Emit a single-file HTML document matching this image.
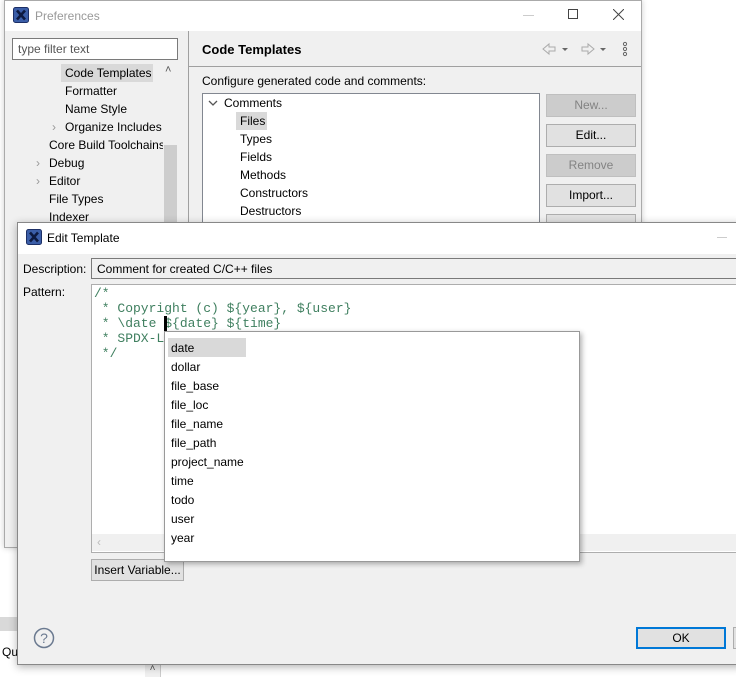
<!DOCTYPE html>
<html><head><style>
*{margin:0;padding:0;box-sizing:border-box}
body{width:736px;height:677px;overflow:hidden;background:#fff;font-family:"Liberation Sans",sans-serif;font-size:12px;color:#000;position:relative}
.a{position:absolute;white-space:nowrap}
.btn{position:absolute;background:#e1e1e1;border:1px solid #adadad;text-align:center;line-height:20px;font-size:12px}
.dis{color:#838383;background:#cccccc;border-color:#bfbfbf}
.mono{font-family:"Liberation Mono",monospace;font-size:13px;color:#3f7f5f;line-height:15px}
</style></head><body>
<div class="a" style="left:4px;top:0;width:638px;height:548px;background:#f0f0f0;border:1px solid #aaa;box-shadow:0 0 6px rgba(0,0,0,.2)"></div>
<div class="a" style="left:5px;top:1px;width:636px;height:30px;background:#fff"></div>
<svg class="a" style="left:13px;top:7px" width="16" height="16"><rect x="0.5" y="0.5" width="15" height="15" rx="2" fill="#3b5ea8" stroke="#1c2f66"/><path d="M4 3.5L12 12.5M12 3.5L4 12.5" stroke="#0d1a40" stroke-width="2.6"/></svg>
<div class="a" style="left:35px;top:9px;color:#999;font-size:12px">Preferences</div>
<div class="a" style="left:523px;top:15px;width:11px;height:1px;background:#ccc"></div>
<div class="a" style="left:568px;top:9px;width:10px;height:10px;border:1px solid #444"></div>
<svg class="a" style="left:613px;top:9px" width="11" height="11"><path d="M0 0L11 11M11 0L0 11" stroke="#444"/></svg>
<div class="a" style="left:12px;top:38px;width:166px;height:22px;background:#fff;border:1px solid #7a7a7a"></div>
<div class="a" style="left:18px;top:42px;color:#555">type filter text</div>
<div class="a" style="left:61px;top:64px;width:92px;height:18px;background:#d9d9d9"></div>
<div class="a" style="left:65px;top:66px">Code Templates</div>
<div class="a" style="left:65px;top:84px">Formatter</div>
<div class="a" style="left:65px;top:102px">Name Style</div>
<div class="a" style="left:52px;top:120px;color:#999">›</div>
<div class="a" style="left:65px;top:120px">Organize Includes</div>
<div class="a" style="left:49px;top:138px;width:114px;overflow:hidden">Core Build Toolchains</div>
<div class="a" style="left:36px;top:156px;color:#999">›</div>
<div class="a" style="left:49px;top:156px">Debug</div>
<div class="a" style="left:36px;top:174px;color:#999">›</div>
<div class="a" style="left:49px;top:174px">Editor</div>
<div class="a" style="left:49px;top:192px">File Types</div>
<div class="a" style="left:49px;top:210px">Indexer</div>
<div class="a" style="left:163px;top:64px;width:15px;height:160px;background:#f0f0f0"></div>
<div class="a" style="left:164px;top:145px;width:13px;height:80px;background:#cdcdcd"></div>
<div class="a" style="left:165px;top:64px;color:#555;font-size:11px">˄</div>
<div class="a" style="left:188px;top:31px;width:1px;height:200px;background:#a0a0a0"></div>
<div class="a" style="left:202px;top:42px;font-weight:bold;font-size:13px">Code Templates</div>
<svg class="a" style="left:540px;top:41px" width="92" height="16"><path d="M3 8L9 3V6H15V10H9V13Z" fill="none" stroke="#aaa"/><path d="M22 7H28L25 10Z" fill="#666"/><path d="M54 8L48 3V6H42V10H48V13Z" fill="none" stroke="#aaa"/><path d="M60 7H66L63 10Z" fill="#666"/><circle cx="85" cy="3" r="1.6" fill="none" stroke="#666"/><circle cx="85" cy="8" r="1.6" fill="none" stroke="#666"/><circle cx="85" cy="13" r="1.6" fill="none" stroke="#666"/></svg>
<div class="a" style="left:189px;top:66px;width:452px;height:1px;background:#a0a0a0"></div>
<div class="a" style="left:202px;top:74px">Configure generated code and comments:</div>
<div class="a" style="left:202px;top:93px;width:338px;height:140px;background:#fff;border:1px solid #828790"></div>
<svg class="a" style="left:208px;top:99px" width="10" height="8"><path d="M1 2L5 6L9 2" fill="none" stroke="#555" stroke-width="1.3"/></svg>
<div class="a" style="left:224px;top:96px">Comments</div>
<div class="a" style="left:236px;top:112px;width:31px;height:18px;background:#d9d9d9"></div>
<div class="a" style="left:240px;top:114px">Files</div>
<div class="a" style="left:240px;top:132px">Types</div>
<div class="a" style="left:240px;top:150px">Fields</div>
<div class="a" style="left:240px;top:168px">Methods</div>
<div class="a" style="left:240px;top:186px">Constructors</div>
<div class="a" style="left:240px;top:204px">Destructors</div>
<div class="btn dis" style="left:546px;top:94px;width:90px;height:23px">New...</div>
<div class="btn" style="left:546px;top:124px;width:90px;height:23px">Edit...</div>
<div class="btn dis" style="left:546px;top:154px;width:90px;height:23px">Remove</div>
<div class="btn" style="left:546px;top:184px;width:90px;height:23px">Import...</div>
<div class="btn" style="left:546px;top:214px;width:90px;height:23px"></div>
<div class="a" style="left:0;top:617px;width:17px;height:14px;background:#d9d9d9"></div>
<div class="a" style="left:2px;top:645px">Qu</div>
<div class="a" style="left:0;top:665px;width:736px;height:12px;background:#fff"></div>
<div class="a" style="left:145px;top:663px;width:16px;height:14px;background:#f0f0f0;border-right:1px solid #ccc;font-size:10px;text-align:center;color:#555">˄</div>
<div class="a" style="left:17px;top:222px;width:725px;height:443px;background:#f0f0f0;border:1px solid #888;box-shadow:0 2px 8px rgba(0,0,0,.3)"></div>
<div class="a" style="left:18px;top:223px;width:718px;height:31px;background:#fff"></div>
<svg class="a" style="left:26px;top:229px" width="16" height="16"><rect x="0.5" y="0.5" width="15" height="15" rx="2" fill="#3b5ea8" stroke="#1c2f66"/><path d="M4 3.5L12 12.5M12 3.5L4 12.5" stroke="#0d1a40" stroke-width="2.6"/></svg>
<div class="a" style="left:47px;top:231px">Edit Template</div>
<div class="a" style="left:717px;top:237px;width:10px;height:1px;background:#ccc"></div>
<div class="a" style="left:23px;top:262px">Description:</div>
<div class="a" style="left:91px;top:258px;width:650px;height:21px;border:1px solid #7a7a7a;background:#f0f0f0"></div>
<div class="a" style="left:97px;top:262px">Comment for created C/C++ files</div>
<div class="a" style="left:23px;top:285px">Pattern:</div>
<div class="a" style="left:91px;top:284px;width:650px;height:269px;border:1px solid #adadad;background:#fff"></div>
<div class="a" style="left:92px;top:534px;width:649px;height:17px;background:#f0f0f0"></div>
<div class="a" style="left:97px;top:535px;color:#bbb">‹</div>
<div class="a mono" style="left:94px;top:286px">/*<br>&nbsp;* Copyright (c) ${year}, ${user}<br>&nbsp;* \date ${date} ${time}<br>&nbsp;* SPDX-Li<br>&nbsp;*/</div>
<div class="a" style="left:164px;top:316px;width:3px;height:15px;background:#000"></div>
<div class="btn" style="left:91px;top:559px;width:93px;height:22px">Insert Variable...</div>
<svg class="a" style="left:33px;top:627px" width="22" height="22"><circle cx="11" cy="11" r="9.5" fill="none" stroke="#6b7a90" stroke-width="1.5"/><text x="11" y="16" font-family="Liberation Sans" font-size="14" text-anchor="middle" fill="#6b7a90">?</text></svg>
<div class="btn" style="left:636px;top:627px;width:90px;height:22px;border:2px solid #0078d7;line-height:18px">OK</div>
<div class="btn" style="left:733px;top:627px;width:20px;height:22px"></div>
<div class="a" style="left:164px;top:331px;width:416px;height:231px;background:#fff;border:1px solid #999;box-shadow:2px 2px 5px rgba(0,0,0,.3)"></div>
<div class="a" style="left:168px;top:338px;width:78px;height:19px;background:#d9d9d9"></div>
<div class="a" style="left:171px;top:339px;line-height:19px">date<br>dollar<br>file_base<br>file_loc<br>file_name<br>file_path<br>project_name<br>time<br>todo<br>user<br>year</div>
</body></html>
